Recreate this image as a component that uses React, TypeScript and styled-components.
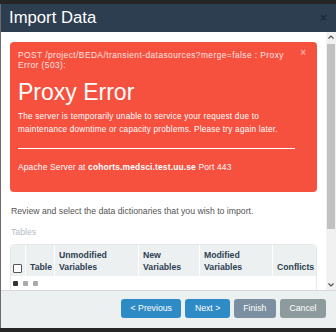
import React from 'react';
import styled, { createGlobalStyle } from 'styled-components';

const GlobalStyle = createGlobalStyle`
  html, body {
    margin: 0;
    padding: 0;
    background: #262626;
  }
  body {
    font-family: "Liberation Sans", Arial, sans-serif;
  }
`;

const Page = styled.div`
  width: 336px;
  height: 332px;
  padding: 4px 0 4px 0;
  box-sizing: border-box;
`;

const Modal = styled.div`
  height: 324px;
  display: flex;
  flex-direction: column;
  background: #fff;
  border-left: 1px solid #6b6b6b;
  box-sizing: border-box;
  overflow: hidden;
`;

const Header = styled.div`
  height: 28px;
  flex: none;
  background: #2c3e50;
  display: flex;
  align-items: center;
  justify-content: space-between;
  padding: 0 9px 0 8px;
`;

const Title = styled.h4`
  margin: 0;
  color: #fff;
  font-size: 16.7px;
  font-weight: 400;
  line-height: 20px;
`;

const HeaderClose = styled.span`
  color: #1d2a37;
  font-size: 12px;
  font-weight: 700;
  line-height: 1;
`;

const Body = styled.div`
  flex: 1;
  display: flex;
  min-height: 0;
`;

const Content = styled.div`
  flex: 1;
  min-width: 0;
  overflow: hidden;
  padding: 10px 9px 0 9px;
`;

const Alert = styled.div`
  position: relative;
  background: #f6503e;
  border-radius: 4px;
  color: #fff;
  padding: 8px 22px 18px 8px;
  height: 150px;
  box-sizing: border-box;
`;

const AlertClose = styled.span`
  position: absolute;
  top: 5px;
  right: 11px;
  color: #f9a79e;
  font-size: 10px;
  font-weight: 700;
`;

const AlertHead = styled.div`
  font-size: 8.35px;
  letter-spacing: 0.45px;
  line-height: 10px;
  color: #fde4e1;
`;

const ErrorTitle = styled.h1`
  margin: 10px 0 6px 0;
  font-size: 23px;
  font-weight: 400;
  line-height: 25px;
`;

const AlertText = styled.p<{ $size: number; $spacing: number }>`
  margin: 0;
  font-size: ${p => p.$size}px;
  letter-spacing: ${p => p.$spacing}px;
  line-height: 12.5px;
`;

const Rule = styled.hr`
  border: 0;
  border-top: 1px solid #fff;
  margin: 12px 0;
`;

const Lead = styled.p`
  margin: 13px 0 8px 1px;
  font-size: 8.7px;
  line-height: 12.5px;
  color: #555;
`;

const SectionLabel = styled.div`
  font-size: 8.7px;
  line-height: 12.5px;
  color: #b4bcc2;
  margin: 0 0 6px 1px;
`;

const Table = styled.table`
  width: 305px;
  table-layout: fixed;
  border-collapse: separate;
  border-spacing: 0;
  border: 1px solid #e6e9ea;
  border-radius: 4px 4px 0 0;
  font-size: 8.7px;
`;

const Th = styled.th`
  background: #ecf0f1;
  color: #2c3e50;
  font-weight: 700;
  text-align: left;
  vertical-align: bottom;
  line-height: 12px;
  padding: 4px 3px 3px 4px;
  border-left: 1px solid #fff;
  &:first-child {
    border-left: 0;
    padding: 0 0 3px 2px;
    border-top-left-radius: 4px;
  }
  &:last-child {
    border-top-right-radius: 4px;
  }
`;

const Td = styled.td`
  padding: 5px 2px 4px 2px;
  height: 14px;
  vertical-align: top;
`;

const Checkbox = styled.span`
  display: block;
  width: 7px;
  height: 7px;
  border: 1px solid #555;
  border-radius: 1px;
  background: #fff;
`;

const Dots = styled.div`
  display: flex;
  gap: 5px;
`;

const Dot = styled.span<{ $dark?: boolean }>`
  width: 5px;
  height: 5px;
  border-radius: 1px;
  background: ${p => (p.$dark ? '#333' : '#aaa')};
`;

const ScrollBar = styled.div`
  width: 10px;
  flex: none;
  background: #f1f1f1;
  display: flex;
  flex-direction: column;
`;

const ScrollArrow = styled.div`
  height: 10px;
  display: flex;
  align-items: center;
  justify-content: center;
  color: #505050;
`;

const ScrollTrack = styled.div`
  flex: 1;
  padding: 2px 1px;
  display: flex;
  flex-direction: column;
`;

const Thumb = styled.div`
  height: 185px;
  background: #c1c1c1;
`;

const Footer = styled.div`
  height: 38px;
  flex: none;
  box-sizing: border-box;
  border-top: 1px solid #d5d9da;
  background: #ecf0f1;
  display: flex;
  justify-content: flex-end;
  align-items: flex-start;
  gap: 4px;
  padding: 8px 10px 0 0;
`;

const Button = styled.button<{ $tone: string }>`
  height: 19px;
  padding: 0 9.5px;
  border: 0;
  border-radius: 3px;
  background: ${p => p.$tone};
  color: #fff;
  font-family: "Liberation Sans", Arial, sans-serif;
  font-size: 8.7px;
  line-height: 19px;
`;

const columns = [14, 29, 84, 61, 73, 44];

const Chevron = ({ up }: { up?: boolean }) => (
  <svg width="6" height="4" viewBox="0 0 6 4">
    <path
      d={up ? 'M0.5 3.5 L3 1 L5.5 3.5' : 'M0.5 0.5 L3 3 L5.5 0.5'}
      fill="none"
      stroke="currentColor"
      strokeWidth="1.2"
    />
  </svg>
);

export default function App() {
  return (
    <Page>
      <GlobalStyle />
      <Modal>
        <Header>
          <Title>Import Data</Title>
          <HeaderClose>×</HeaderClose>
        </Header>
        <Body>
          <Content>
            <Alert>
              <AlertClose>×</AlertClose>
              <AlertHead>
                POST /project/BEDA/transient-datasources?merge=false : Proxy Error (503):
              </AlertHead>
              <ErrorTitle>Proxy Error</ErrorTitle>
              <AlertText $size={8.2} $spacing={0.22}>
                The server is temporarily unable to service your request due to maintenance
                downtime or capacity problems. Please try again later.
              </AlertText>
              <Rule />
              <AlertText $size={8.45} $spacing={0.15}>
                Apache Server at <b>cohorts.medsci.test.uu.se</b> Port 443
              </AlertText>
            </Alert>
            <Lead>Review and select the data dictionaries that you wish to import.</Lead>
            <SectionLabel>Tables</SectionLabel>
            <Table>
              <colgroup>
                {columns.map((w, i) => (
                  <col key={i} style={{ width: w }} />
                ))}
              </colgroup>
              <thead>
                <tr>
                  <Th>
                    <Checkbox />
                  </Th>
                  <Th>Table</Th>
                  <Th>Unmodified Variables</Th>
                  <Th>New Variables</Th>
                  <Th>Modified Variables</Th>
                  <Th>Conflicts</Th>
                </tr>
              </thead>
              <tbody>
                <tr>
                  <Td colSpan={6}>
                    <Dots>
                      <Dot $dark />
                      <Dot />
                      <Dot />
                    </Dots>
                  </Td>
                </tr>
              </tbody>
            </Table>
          </Content>
          <ScrollBar>
            <ScrollArrow>
              <Chevron up />
            </ScrollArrow>
            <ScrollTrack>
              <Thumb />
            </ScrollTrack>
            <ScrollArrow>
              <Chevron />
            </ScrollArrow>
          </ScrollBar>
        </Body>
        <Footer>
          <Button $tone="#2e8bc6">&lt; Previous</Button>
          <Button $tone="#2e8bc6">Next &gt;</Button>
          <Button $tone="#7b8fa1">Finish</Button>
          <Button $tone="#8d9b9c">Cancel</Button>
        </Footer>
      </Modal>
    </Page>
  );
}
